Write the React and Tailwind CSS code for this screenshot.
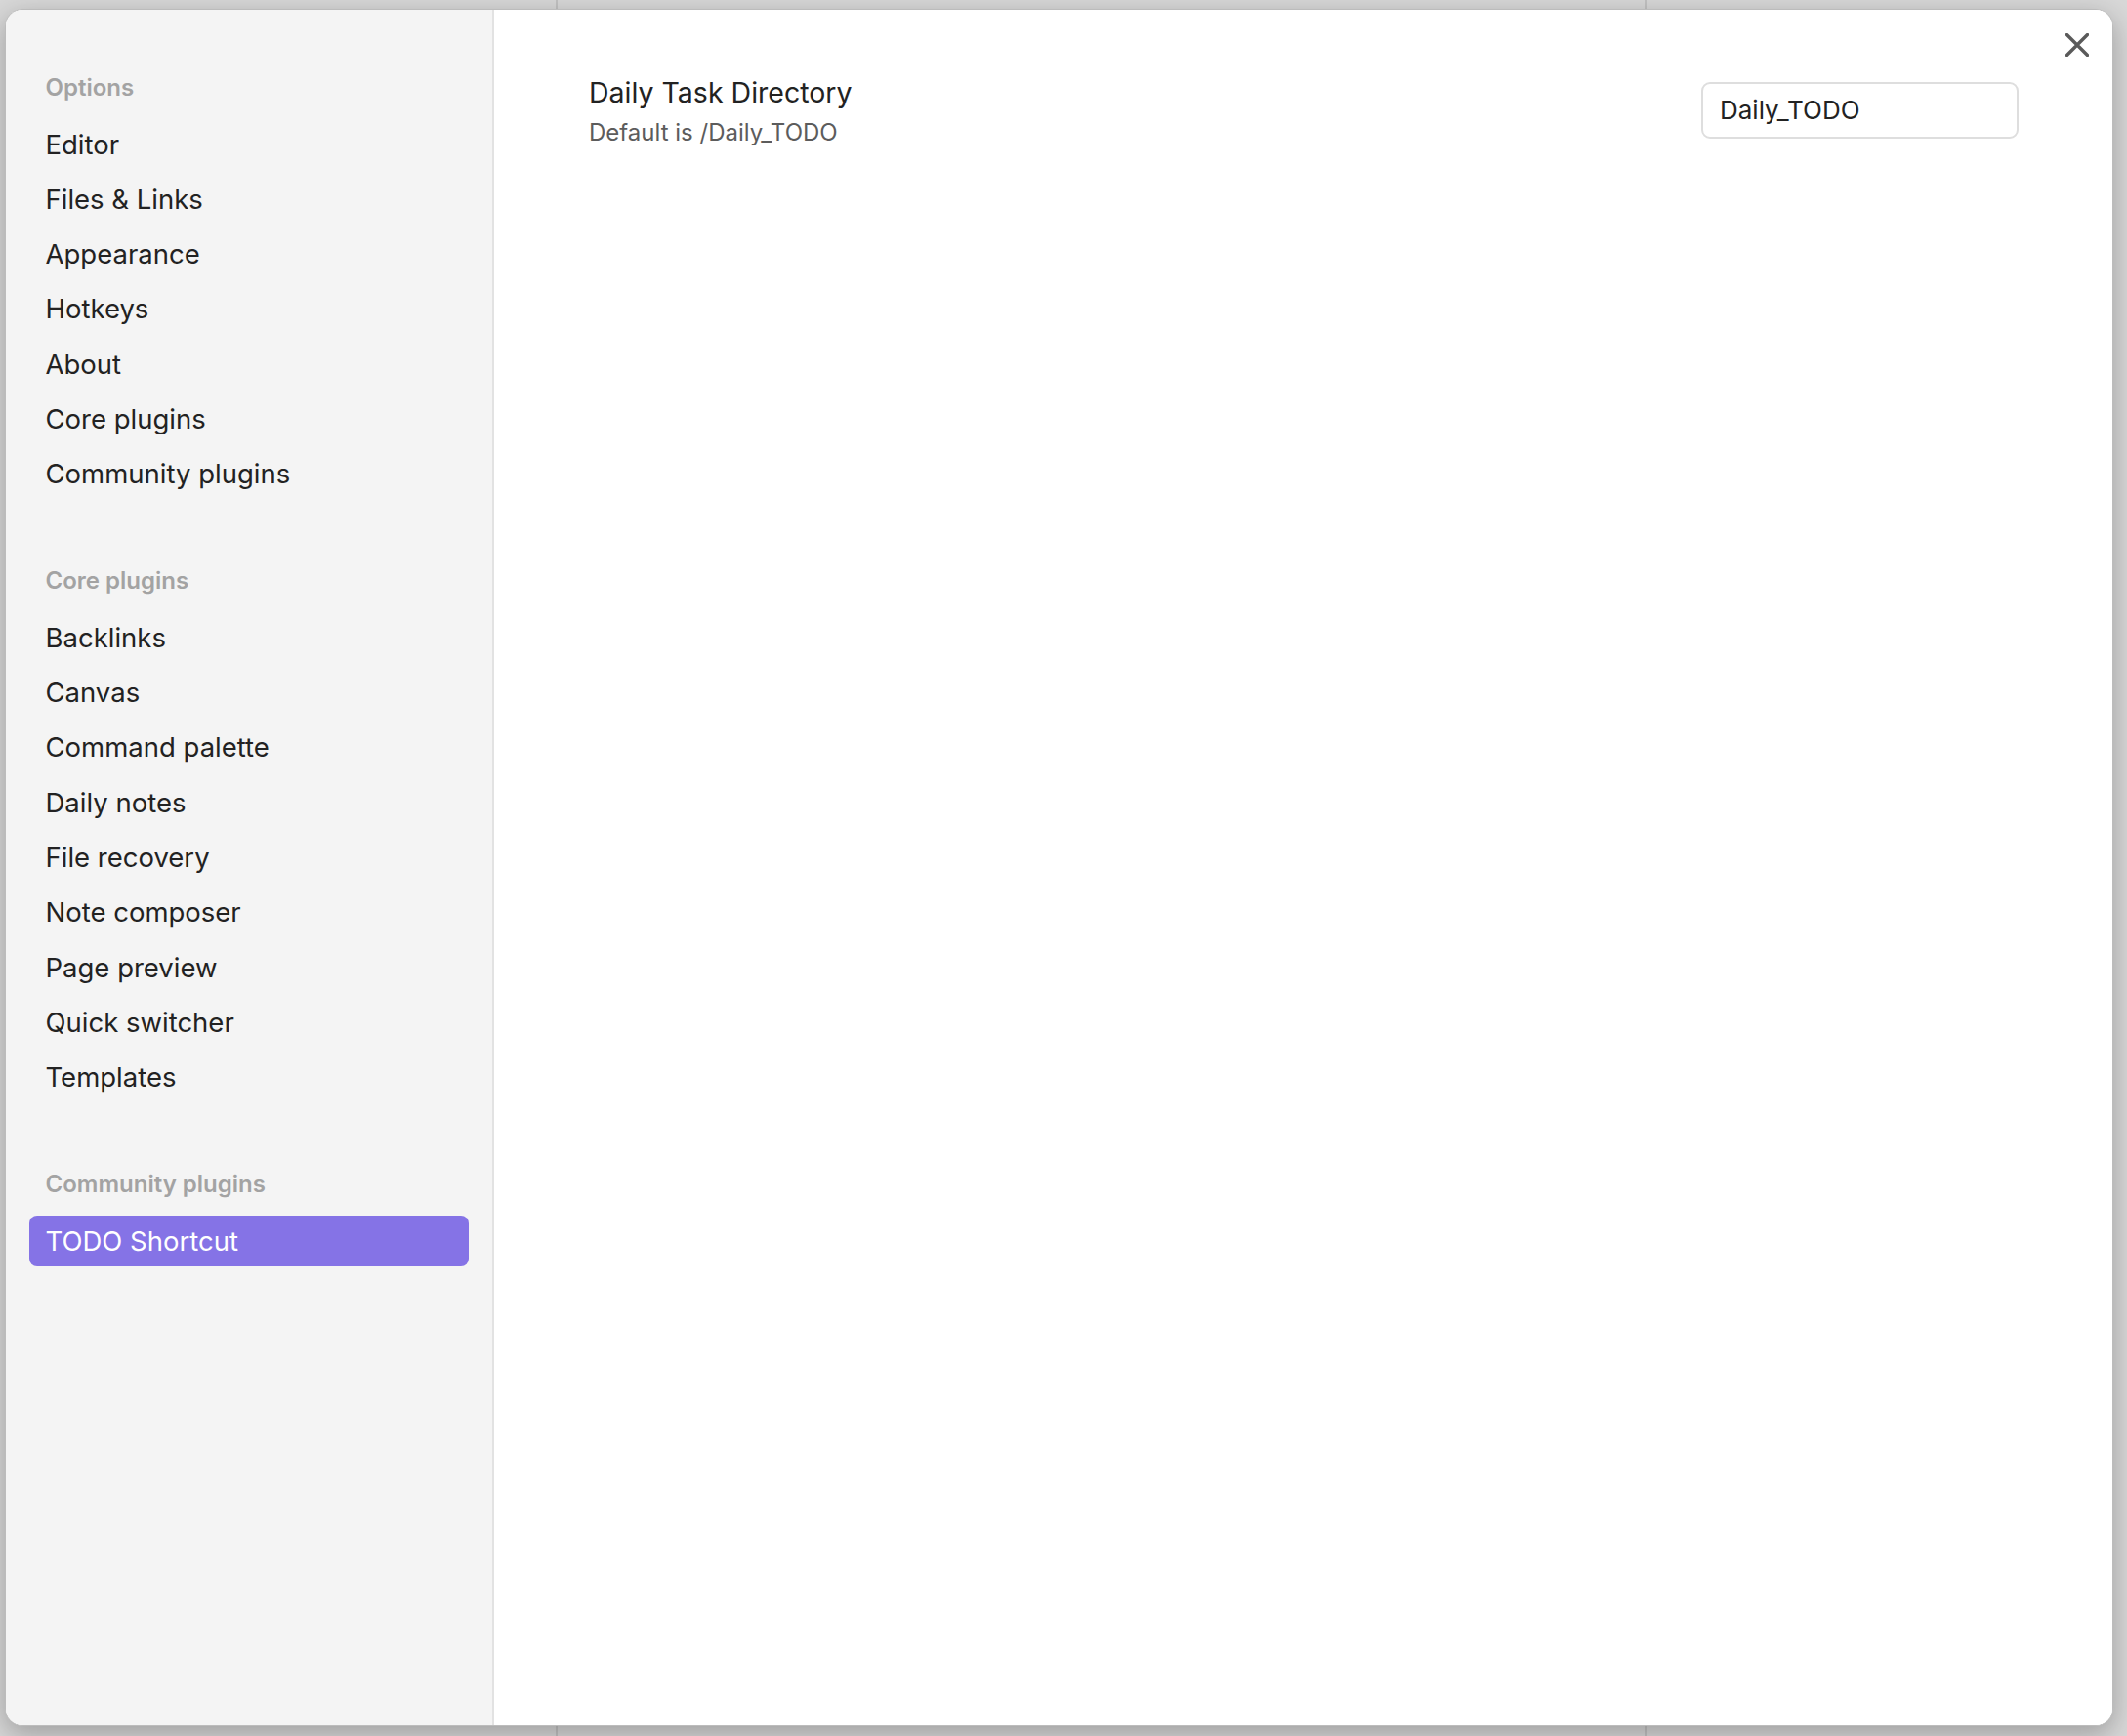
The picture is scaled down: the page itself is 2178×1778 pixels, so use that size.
import React from "react";

const sections = [
  {
    title: "Options",
    items: ["Editor", "Files & Links", "Appearance", "Hotkeys", "About", "Core plugins", "Community plugins"],
  },
  {
    title: "Core plugins",
    items: [
      "Backlinks",
      "Canvas",
      "Command palette",
      "Daily notes",
      "File recovery",
      "Note composer",
      "Page preview",
      "Quick switcher",
      "Templates",
    ],
  },
  {
    title: "Community plugins",
    items: ["TODO Shortcut"],
    active: "TODO Shortcut",
  },
];

function NavSection({ title, items, active }) {
  return (
    <div className="flex flex-col">
      <div className="h-[30px] leading-[30px] pl-[16.5px] text-[24px] font-semibold text-[#a3a3a3]">{title}</div>
      <div className="mt-[16.5px] flex flex-col gap-[3.8px]">
        {items.map((it) =>
          it === active ? (
            <div
              key={it}
              className="h-[52.5px] leading-[52.5px] rounded-[8px] bg-[#8573e6] pl-[16.5px] text-[27.5px] text-white"
            >
              {it}
            </div>
          ) : (
            <div key={it} className="h-[52.5px] leading-[52.5px] rounded-[8px] pl-[16.5px] text-[27.5px] text-[#222222]">
              {it}
            </div>
          )
        )}
      </div>
    </div>
  );
}

export default function App() {
  return (
    <div
      className="relative w-[2178px] h-[1778px] overflow-hidden bg-[#d3d3d3]"
      style={{ fontFamily: 'Inter, "Noto Sans", "Liberation Sans", sans-serif' }}
    >
      {/* background window panes */}
      <div className="flex h-full">
        <div className="w-[571px] h-full border-r-2 border-[#c2c2c2] bg-[#d8d8d8]" />
        <div className="w-[1115px] h-full border-r-2 border-[#c2c2c2] bg-[#d8d8d8]" />
        <div className="flex-1 h-full bg-[#d8d8d8]" />
      </div>

      {/* modal */}
      <div className="absolute top-[9px] left-[5px] right-[14px] bottom-[10px] flex overflow-hidden rounded-[18px] border border-[#bcbcbc] bg-white shadow-[0_8px_28px_rgba(0,0,0,0.28)]">
        <aside className="w-[500px] shrink-0 bg-[#f4f4f4] border-r-2 border-[#e2e2e2] pt-[65px] px-[24px] flex flex-col gap-[68.5px]">
          {sections.map((s) => (
            <NavSection key={s.title} {...s} />
          ))}
        </aside>

        <main className="relative flex-1 bg-white pt-[66.5px] pl-[97px] pr-[96px]">
          <div className="flex items-start justify-between">
            <div className="flex flex-col gap-[8px]">
              <div className="h-[36px] leading-[36px] text-[28.5px] text-[#222222]">Daily Task Directory</div>
              <div className="h-[30px] leading-[30px] text-[24px] text-[#5c5c5c]">Default is /Daily_TODO</div>
            </div>
            <div className="mt-[7px] w-[325px] h-[58px] rounded-[9px] border-2 border-[#dedede] bg-white flex items-center pl-[17px] text-[26px] text-[#222222]">
              Daily_TODO
            </div>
          </div>

          <button className="absolute top-[14px] right-[14px] w-[44px] h-[44px] flex items-center justify-center">
            <svg width="24" height="24" viewBox="0 0 24 24" fill="none">
              <path d="M1.5 1.5 L22.5 22.5 M22.5 1.5 L1.5 22.5" stroke="#5a5a5a" strokeWidth="3.4" strokeLinecap="round" />
            </svg>
          </button>
        </main>
      </div>
    </div>
  );
}
